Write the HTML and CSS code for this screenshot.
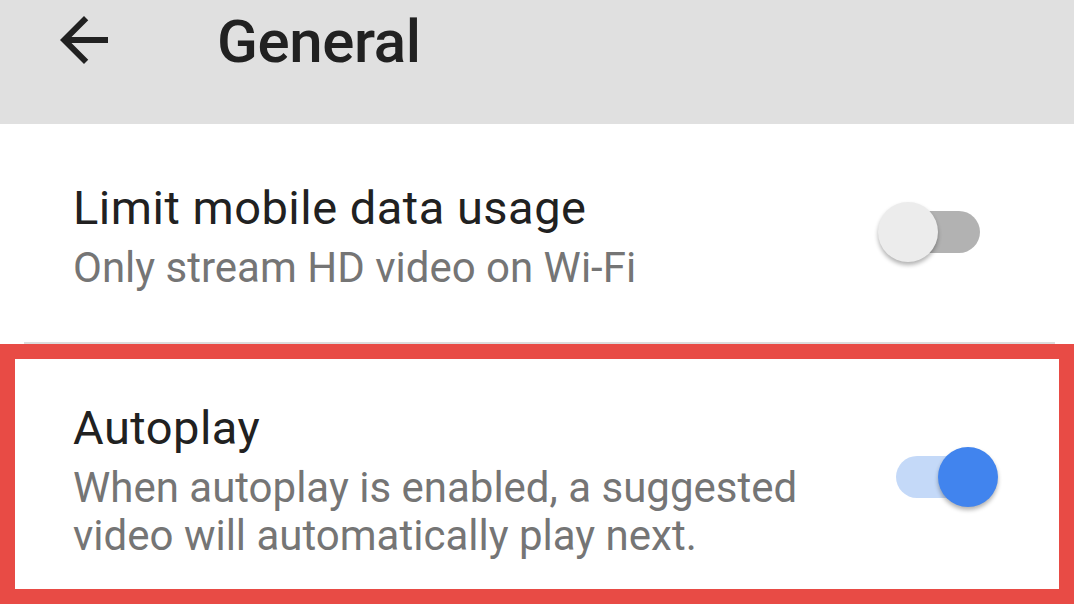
FILE: index.html
```html
<!DOCTYPE html>
<html lang="en">
<head>
  <meta charset="UTF-8">
  <meta name="viewport" content="width=device-width, initial-scale=1.0">
  <title>General</title>
  <link rel="stylesheet" href="styles.css">
</head>
<body>
  <!-- 상단 바 -->
  <header class="appBar">
    <button class="backButton" aria-label="Back">
      <svg viewBox="0 0 24 24" width="72" height="72">
        <path d="M20 11H7.83l5.59-5.59L12 4l-8 8 8 8 1.41-1.41L7.83 13H20v-2z" fill="#212121"/>
      </svg>
    </button>
    <h1 class="appTitle">General</h1>
  </header>

  <!-- 설정 목록 -->
  <main class="settingsList">
    <div class="settingRow">
      <div class="settingText">
        <div class="settingTitle">Limit mobile data usage</div>
        <div class="settingDesc">Only stream HD video on Wi-Fi</div>
      </div>
      <div class="switch">
        <span class="switchTrack"></span>
        <span class="switchThumb"></span>
      </div>
    </div>

    <div class="divider"></div>

    <div class="highlightBox">
      <div class="settingRow autoplayRow">
        <div class="settingText">
          <div class="settingTitle">Autoplay</div>
          <div class="settingDesc">When autoplay is enabled, a suggested video will automatically play next.</div>
        </div>
        <div class="switch isOn">
          <span class="switchTrack"></span>
          <span class="switchThumb"></span>
        </div>
      </div>
    </div>
  </main>
</body>
</html>
```

FILE: styles.css
```css
/* 공통 스타일 */
body {
  margin: 0;
  font-family: Roboto, "Noto Sans", sans-serif;
  background: #fff;
  overflow: hidden;
}

/* 상단 바 */
.appBar {
  height: 124px;
  background-color: #e0e0e0;
  display: flex;
  align-items: flex-start;
  padding-left: 48px;
  box-sizing: border-box;
}

.backButton {
  background: none;
  border: none;
  padding: 0;
  margin-top: 4px;
  width: 72px;
  height: 72px;
  cursor: pointer;
}

.backButton svg {
  display: block;
}

.appTitle {
  margin: 0 0 0 97px;
  font-size: 60px;
  font-weight: 500;
  letter-spacing: -0.4px;
  line-height: 84px;
  color: #212121;
}

/* 설정 행 */
.settingRow {
  display: flex;
  align-items: flex-start;
  justify-content: space-between;
  padding: 58px 76px 50px 73px;
}

.settingTitle {
  font-size: 47px;
  letter-spacing: 0.5px;
  line-height: 52px;
  color: #212121;
}

.settingDesc {
  margin-top: 10px;
  font-size: 42px;
  line-height: 48px;
  color: #757575;
}

.divider {
  height: 2px;
  margin: 0 19px 0 24px;
  background-color: #dcdcdc;
}

/* 빨간 강조 박스 */
.highlightBox {
  border: 15px solid #e84b45;
  height: 260px;
  box-sizing: border-box;
}

.autoplayRow {
  padding: 43px 61px 0 58px;
}

.autoplayRow .settingDesc {
  max-width: 760px;
}

/* 스위치 */
.switch {
  position: relative;
  width: 120px;
  height: 60px;
  margin-top: 20px;
  flex-shrink: 0;
}

.switchTrack {
  position: absolute;
  left: 18px;
  top: 9px;
  width: 84px;
  height: 42px;
  border-radius: 21px;
  background-color: #b2b2b2;
}

.switchThumb {
  position: absolute;
  left: 0;
  top: 0;
  width: 60px;
  height: 60px;
  border-radius: 50%;
  background-color: #ececec;
  box-shadow: 0 3px 4px rgba(0, 0, 0, 0.3);
}

.switch.isOn {
  margin-top: 45px;
}

.switch.isOn .switchTrack {
  background-color: #c4d9f8;
}

.switch.isOn .switchThumb {
  left: 60px;
  background-color: #4184ee;
}
```
